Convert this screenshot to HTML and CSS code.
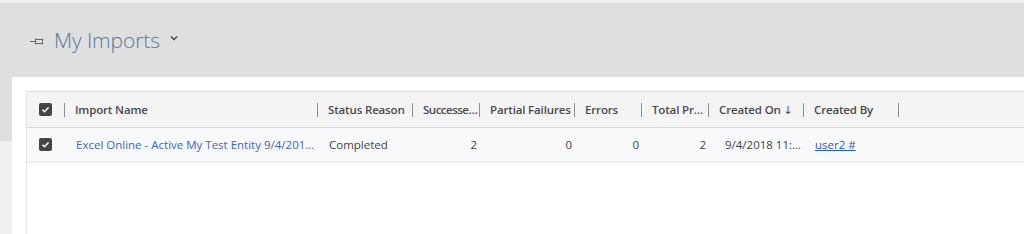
FILE: index.html
```html
<!DOCTYPE html>
<html>
<head>
<meta charset="utf-8">
<title>My Imports</title>
<link rel="stylesheet" href="styles.css">
</head>
<body>
<div class="topline"></div>
<header class="viewbar">
  <svg class="pin" width="14" height="8" viewBox="0 0 14 8"><path d="M0 4.5H5M5.5 1.5V7.5M5.5 2.5H12.5V6.5H5.5M12.5 1.5V7.5" fill="none" stroke="#666" stroke-width="1"/></svg>
  <h1 class="title">My Imports</h1>
  <svg class="chev" width="8" height="6" viewBox="0 0 8 6"><path d="M1 1.5L4 4.5L7 1.5" fill="none" stroke="#444" stroke-width="1.4"/></svg>
</header>
<div class="main">
  <div class="gutter"></div>
  <section class="panel">
    <div class="grid">
      <div class="row head">
        <div class="cell checkcell"><span class="box"><svg width="13" height="13" viewBox="0 0 13 13"><path d="M3.5 6.8L5.5 8.7L9.5 4.5" fill="none" stroke="#fff" stroke-width="1.5"/></svg></span><span class="spacer"></span><span class="sep"></span></div>
        <div class="cell"><span class="txt">Import Name</span><span class="sep"></span></div>
        <div class="cell"><span class="txt">Status Reason</span><span class="sep"></span></div>
        <div class="cell"><span class="txt tight">Successe…</span><span class="sep"></span></div>
        <div class="cell"><span class="txt">Partial Failures</span><span class="sep"></span></div>
        <div class="cell"><span class="txt">Errors</span><span class="sep"></span></div>
        <div class="cell"><span class="txt">Total Pr…</span><span class="sep"></span></div>
        <div class="cell"><span class="txt">Created On <span class="arrow">↓</span></span><span class="sep"></span></div>
        <div class="cell"><span class="txt">Created By</span><span class="sep"></span></div>
        <div class="cell"></div>
      </div>
      <div class="row data">
        <div class="cell checkcell"><span class="box"><svg width="13" height="13" viewBox="0 0 13 13"><path d="M3.5 6.8L5.5 8.7L9.5 4.5" fill="none" stroke="#fff" stroke-width="1.5"/></svg></span></div>
        <div class="cell"><span class="txt link">Excel Online - Active My Test Entity 9/4/201…</span></div>
        <div class="cell"><span class="txt">Completed</span></div>
        <div class="cell num"><span class="txt">2</span></div>
        <div class="cell num"><span class="txt">0</span></div>
        <div class="cell num"><span class="txt">0</span></div>
        <div class="cell num"><span class="txt">2</span></div>
        <div class="cell num"><span class="txt">9/4/2018 11:…</span></div>
        <div class="cell"><span class="txt user">user2 #</span></div>
        <div class="cell"></div>
      </div>
    </div>
  </section>
</div>
</body>
</html>
```
FILE: styles.css
```css
html, body {
  margin: 0;
  padding: 0;
}
body {
  width: 1024px;
  height: 234px;
  overflow: hidden;
  background: #efefef;
  font-family: "Open Sans", "Noto Sans", "Liberation Sans", sans-serif;
  color: #444;
}
.topline {
  height: 3px;
  background: #efefef;
}
.viewbar {
  height: 74px;
  background: #dfdfdf;
  display: flex;
  align-items: center;
  padding-left: 30px;
  box-sizing: border-box;
}
.pin {
  margin-top: 2px;
}
.title {
  margin: 0 0 0 10px;
  font-weight: 300;
  font-size: 21px;
  color: #5578a3;
  letter-spacing: -0.1px;
}
.chev {
  margin-left: 10px;
  margin-top: -4px;
}
.main {
  display: flex;
  height: 157px;
}
.gutter {
  width: 12px;
  background: linear-gradient(#dfdfdf 0, #dfdfdf 64px, #efefef 64px);
}
.panel {
  flex: 1;
  background: #fff;
  padding: 14px 0 0 14px;
}
.grid {
  border-top: 1px solid #dcdcdc;
  border-left: 1px solid #e6e6e6;
  height: 100%;
}
.row {
  display: grid;
  grid-template-columns: 38px 253px 95px 67px 95px 67px 67px 95px 95px 1fr;
}
.head {
  height: 35px;
  background: #f4f4f4;
  border-bottom: 1px solid #dadada;
  font-weight: 600;
  font-size: 11.5px;
  color: #4a4a4a;
  letter-spacing: -0.15px;
}
.data {
  height: 33px;
  background: #f8f9fb;
  border-bottom: 2px solid #ececec;
  font-size: 11.5px;
}
.cell {
  display: flex;
  align-items: center;
  min-width: 0;
}
.head .cell .txt {
  flex: 1;
  padding-left: 10px;
  white-space: nowrap;
  min-width: 0;
}
.head .cell .tight {
  letter-spacing: -0.5px;
}
.head .checkcell {
  padding-left: 12px;
}
.spacer {
  flex: 1;
}
.sep {
  width: 1px;
  height: 14px;
  background: #8e8e8e;
  flex: none;
}
.box {
  width: 13px;
  height: 13px;
  border-radius: 2px;
  background: #454545;
  display: block;
  flex: none;
}
.box svg {
  display: block;
}
.data .checkcell {
  padding-left: 12px;
  padding-bottom: 1px;
}
.data .cell .txt {
  padding-left: 11px;
  white-space: nowrap;
  overflow: hidden;
  text-overflow: ellipsis;
}
.data .num {
  justify-content: flex-end;
}
.data .num .txt {
  padding-left: 0;
  padding-right: 3px;
}
.link {
  color: #3c66bf;
}
.user {
  color: #2160bd;
  text-decoration: underline;
}
.arrow {
  font-weight: 400;
  font-family: "DejaVu Sans", sans-serif;
  font-size: 11px;
}
```
